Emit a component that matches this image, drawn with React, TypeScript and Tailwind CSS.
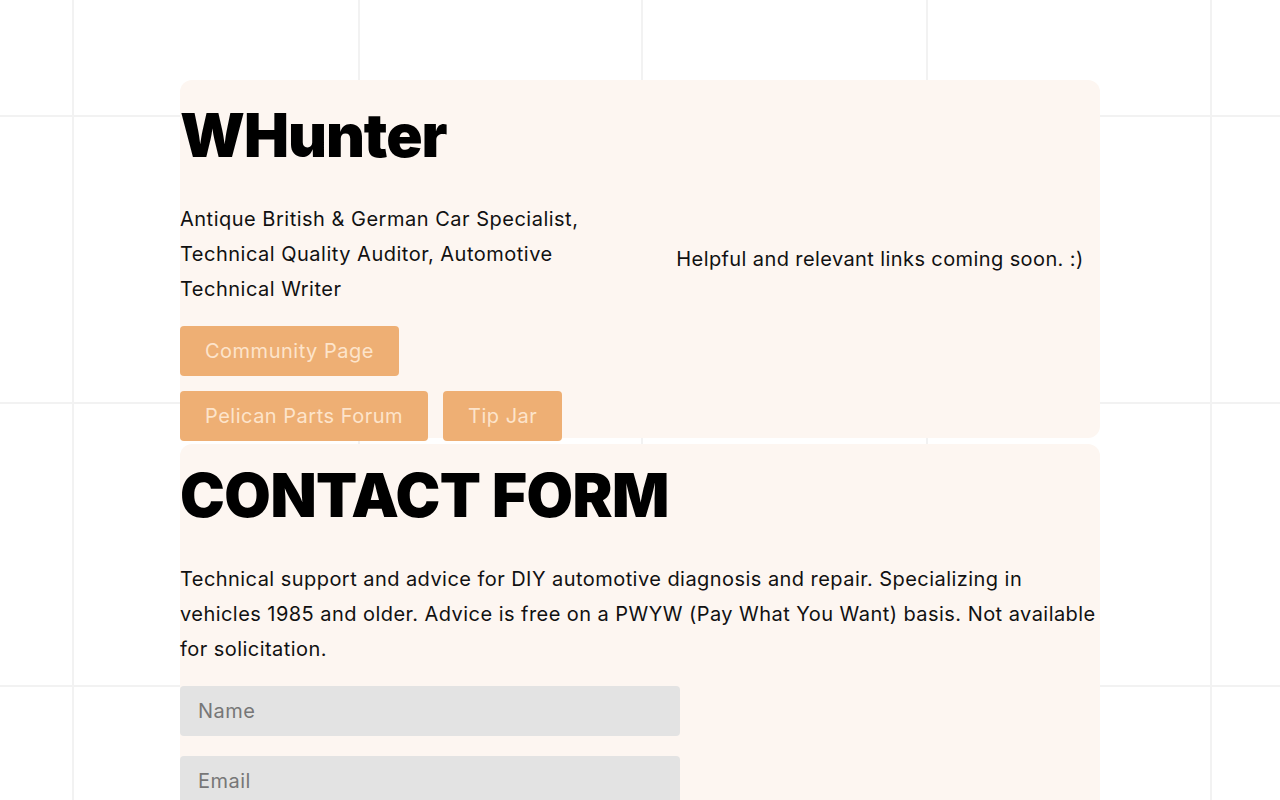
import React from "react";

const body = { fontFamily: "Inter, 'Noto Sans', sans-serif" };

function GridBg() {
  const xs = [73, 359, 642, 927, 1211];
  const ys = [116, 403, 686];
  return (
    <svg className="absolute inset-0 pointer-events-none" width="1280" height="800" aria-hidden="true">
      {xs.map((x) => (
        <line key={"x" + x} x1={x} y1={0} x2={x} y2={800} stroke="#f2f2f2" strokeWidth={2} />
      ))}
      {ys.map((y) => (
        <line key={"y" + y} x1={0} y1={y} x2={1280} y2={y} stroke="#f2f2f2" strokeWidth={2} />
      ))}
    </svg>
  );
}

function Btn({ children }: { children: React.ReactNode }) {
  return (
    <a className="inline-flex h-[50px] items-center rounded-[4px] bg-[#eeaf74] px-[25px] text-[20px] tracking-[0.5px] text-[#fde4cb]">
      {children}
    </a>
  );
}

export default function App() {
  return (
    <div className="relative min-h-[800px] w-full overflow-hidden bg-white text-[#111]" style={body}>
      <GridBg />
      <div className="relative mx-auto w-[920px] pt-[80px]">
        <section className="flex h-[358px] rounded-[12px] bg-[#fdf6f1]">
          <div className="w-[480px]">
            <h1 className="mt-[17px] text-[60px] leading-[76px] font-black tracking-[-1px] text-black" style={{ fontFamily: "Inter, sans-serif" }}>
              WHunter
            </h1>
            <p className="mt-[29px] text-[20px] leading-[35px] tracking-[0.5px]">
              Antique British &amp; German Car Specialist,
              <br />
              Technical Quality Auditor, Automotive
              <br />
              Technical Writer
            </p>
            <div className="mt-[19px] flex flex-col gap-[15px]">
              <div className="flex gap-[15px]">
                <Btn>Community Page</Btn>
              </div>
              <div className="flex gap-[15px]">
                <Btn>Pelican Parts Forum</Btn>
                <Btn>Tip Jar</Btn>
              </div>
            </div>
          </div>
          <div className="flex flex-1 items-center justify-center">
            <p className="text-[20px] leading-[35px] tracking-[0.4px]">Helpful and relevant links coming soon. :)</p>
          </div>
        </section>
        <section className="mt-[6px] h-[400px] rounded-t-[12px] bg-[#fdf6f1] pt-[13px]">
          <h2 className="text-[60px] leading-[76px] font-black tracking-[-0.5px] text-black" style={{ fontFamily: "Inter, sans-serif" }}>
            CONTACT FORM
          </h2>
          <p className="mt-[29px] whitespace-nowrap text-[20px] leading-[35px] tracking-[0.45px]">
            Technical support and advice for DIY automotive diagnosis and repair. Specializing in
            <br />
            vehicles 1985 and older. Advice is free on a PWYW (Pay What You Want) basis. Not available
            <br />
            for solicitation.
          </p>
          <div className="mt-[19px] flex flex-col gap-[20px]">
            <input
              placeholder="Name"
              className="h-[50px] w-[500px] rounded-[4px] bg-[#e3e3e3] px-[18px] text-[20px] tracking-[0.5px] text-[#333] outline-none placeholder:text-[#777]"
            />
            <input
              placeholder="Email"
              className="h-[50px] w-[500px] rounded-[4px] bg-[#e3e3e3] px-[18px] text-[20px] tracking-[0.5px] text-[#333] outline-none placeholder:text-[#777]"
            />
          </div>
        </section>
      </div>
    </div>
  );
}
